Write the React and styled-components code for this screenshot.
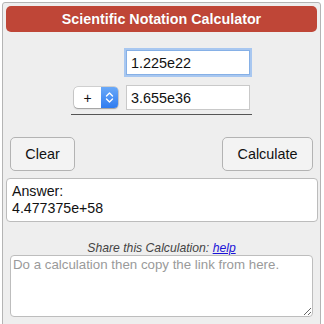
import React from "react";
import styled, { createGlobalStyle } from "styled-components";

const GlobalStyle = createGlobalStyle`
  body {
    margin: 0;
    background: #ffffff;
    font-family: "Liberation Sans", Arial, sans-serif;
  }
`;

const Panel = styled.div`
  margin: 2px 3px 0 2px;
  border: 1px solid #b4b4b4;
  border-radius: 3px;
  background: #eeeeee;
  padding: 3px 3px 12px 3px;
`;

const Header = styled.div`
  height: 26px;
  background: #bf4637;
  border-radius: 5px;
  color: #ffffff;
  font-weight: bold;
  font-size: 14.3px;
  display: flex;
  align-items: center;
  justify-content: center;
  text-shadow: 0 0 1px rgba(0, 0, 0, 0.15);
`;

const Problem = styled.div`
  width: 181px;
  margin: 18px auto 0;
  padding-bottom: 4px;
  border-bottom: 1px solid #555555;
  display: flex;
  flex-direction: column;
  align-items: flex-end;
  gap: 10px;
`;

const Row = styled.div`
  display: flex;
  align-items: center;
  gap: 8px;
  padding-right: 2px;
`;

const NumberInput = styled.input`
  box-sizing: border-box;
  width: 124px;
  height: 25px;
  border: 1px solid ${(p) => (p.focused ? "#86b0e6" : "#c9c9c9")};
  box-shadow: ${(p) => (p.focused ? "0 0 0 2px #a8c7f0" : "none")};
  outline: none;
  background: #ffffff;
  font-family: "Liberation Sans", Arial, sans-serif;
  font-size: 14.4px;
  color: #111111;
  padding: 0 4px;
`;

const SelectBox = styled.div`
  display: flex;
  width: 44px;
  height: 21px;
  border-radius: 4px;
  background: #ffffff;
  box-shadow: 0 0 0 0.5px rgba(0, 0, 0, 0.25), 0 1px 1.5px rgba(0, 0, 0, 0.25);
  overflow: hidden;
`;

const SelectText = styled.div`
  flex: 1;
  display: flex;
  align-items: center;
  justify-content: center;
  font-size: 14px;
  color: #111111;
`;

const SelectArrow = styled.div`
  width: 17px;
  background: linear-gradient(#6aa9f8, #2f7cf0);
  display: flex;
  align-items: center;
  justify-content: center;
`;

const ButtonRow = styled.div`
  display: flex;
  justify-content: space-between;
  padding: 0 4px 0 4px;
  margin-top: 22px;
`;

const Button = styled.button`
  height: 34px;
  width: ${(p) => p.w}px;
  background: #f3f3f3;
  border: 1px solid #b3b3b3;
  border-radius: 5px;
  font-family: "Liberation Sans", Arial, sans-serif;
  font-size: 14.4px;
  color: #111111;
  padding: 0;
`;

const Answer = styled.div`
  margin-top: 7px;
  margin-right: -1px;
  height: 44px;
  box-sizing: border-box;
  background: #ffffff;
  border: 1px solid #bcbcbc;
  border-radius: 4px;
  padding: 4px 5px;
  font-size: 14.2px;
  line-height: 17px;
  color: #111111;
`;

const ShareLabel = styled.div`
  margin-top: 19px;
  text-align: center;
  font-style: italic;
  font-size: 12.2px;
  color: #444444;
  line-height: 14px;
`;

const HelpLink = styled.a`
  color: #1a12d8;
  text-decoration: underline;
`;

const ShareBox = styled.textarea`
  display: block;
  box-sizing: border-box;
  margin: 0 4px 0 4px;
  width: calc(100% - 8px);
  height: 62px;
  border: 1px solid #bdbdbd;
  border-radius: 4px;
  background: #ffffff;
  font-family: "Liberation Sans", Arial, sans-serif;
  font-size: 13.3px;
  padding: 1px 2px;
  resize: vertical;
  outline: none;
  &::placeholder {
    color: #9a9a9a;
  }
`;

const Chevrons = () => (
  <svg width="9" height="13" viewBox="0 0 9 13">
    <path d="M1.5 5 L4.5 2 L7.5 5" fill="none" stroke="#fff" strokeWidth="1.4" strokeLinecap="round" strokeLinejoin="round" />
    <path d="M1.5 8 L4.5 11 L7.5 8" fill="none" stroke="#fff" strokeWidth="1.4" strokeLinecap="round" strokeLinejoin="round" />
  </svg>
);

const App = () => {
  return (
    <>
      <GlobalStyle />
      <Panel>
        <Header>Scientific Notation Calculator</Header>
        <Problem>
          <Row>
            <NumberInput focused defaultValue="1.225e22" />
          </Row>
          <Row>
            <SelectBox>
              <SelectText>+</SelectText>
              <SelectArrow>
                <Chevrons />
              </SelectArrow>
            </SelectBox>
            <NumberInput defaultValue="3.655e36" />
          </Row>
        </Problem>
        <ButtonRow>
          <Button w={65}>Clear</Button>
          <Button w={91}>Calculate</Button>
        </ButtonRow>
        <Answer>
          Answer:
          <br />
          4.477375e+58
        </Answer>
        <ShareLabel>
          Share this Calculation: <HelpLink href="#">help</HelpLink>
        </ShareLabel>
        <ShareBox placeholder="Do a calculation then copy the link from here." />
      </Panel>
    </>
  );
};

export default App;
